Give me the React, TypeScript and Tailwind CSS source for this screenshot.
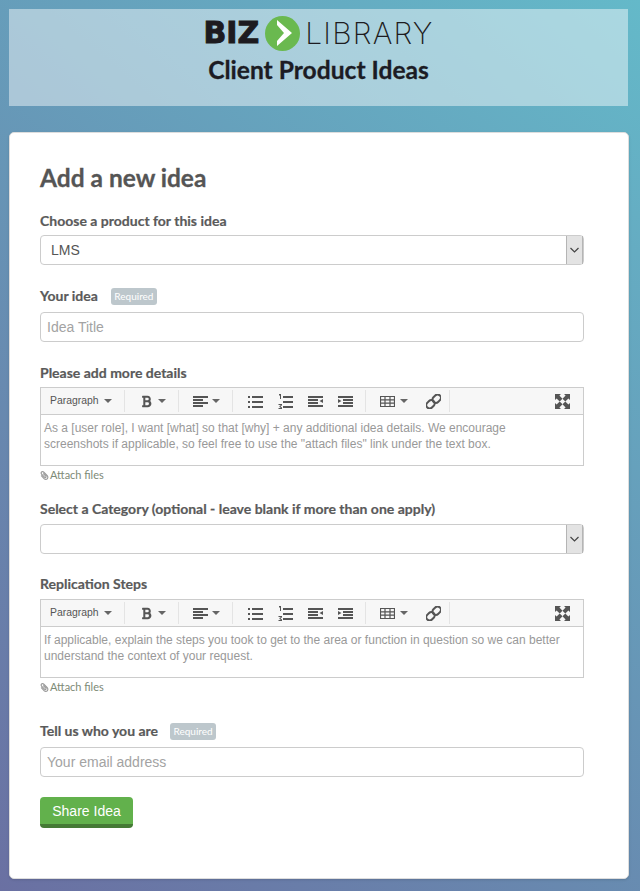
import type { ReactNode } from 'react'
import { FaBold, FaPaperclip } from 'react-icons/fa'

const lato = 'font-[Lato,"Liberation_Sans",sans-serif]'

function Caret() {
  return <span className="inline-block w-0 h-0 border-x-[4.5px] border-x-transparent border-t-[4.5px] border-t-[#666]" />
}

function Label({ children }: { children: ReactNode }) {
  return <div className={`${lato} text-[14px] leading-[20px] font-bold text-[#5a5a5a] [-webkit-text-stroke:0.2px_#5a5a5a]`}>{children}</div>
}

function Required() {
  return (
    <span className="h-[17px] px-[3.5px] rounded-[3px] bg-[#bdc7cc] text-white text-[10px] leading-[17px] font-[Lato,sans-serif] font-normal">
      Required
    </span>
  )
}

// toolbar glyphs, all on a 15x13 box
function Glyph({ children, w = 15, h = 13 }: { children: ReactNode; w?: number; h?: number }) {
  return (
    <svg width={w} height={h} viewBox={`0 0 ${w} ${h}`} fill="#555">
      {children}
    </svg>
  )
}

const AlignIcon = () => (
  <Glyph>
    <rect x="0" y="1" width="15" height="2" />
    <rect x="0" y="4" width="10" height="2" />
    <rect x="0" y="7" width="15" height="2" />
    <rect x="0" y="10" width="10" height="2" />
  </Glyph>
)

const UlIcon = () => (
  <Glyph>
    <rect x="0" y="1" width="2" height="2" />
    <rect x="4" y="1" width="11" height="2" />
    <rect x="0" y="6" width="2" height="2" />
    <rect x="4" y="6" width="11" height="2" />
    <rect x="0" y="11" width="2" height="2" />
    <rect x="4" y="11" width="11" height="2" />
  </Glyph>
)

const OlIcon = () => (
  <Glyph h={15}>
    <path d="M1 0h2v5H2V1.5H1zM0.5 10h3.5v1.2l-1.5 1.2L4 13.5V15H0.5v-1H3l-1.5-1v-1L3 11H0.5z" />
    <rect x="5" y="2" width="10" height="2" />
    <rect x="5" y="7" width="10" height="2" />
    <rect x="5" y="12" width="10" height="2" />
  </Glyph>
)

const OutdentIcon = () => (
  <Glyph>
    <rect x="0" y="1" width="15" height="2" />
    <rect x="0" y="4" width="10" height="2" />
    <rect x="0" y="7" width="10" height="2" />
    <rect x="0" y="10" width="15" height="2" />
    <path d="M15 4v4l-3.5-2z" />
  </Glyph>
)

const IndentIcon = () => (
  <Glyph>
    <rect x="0" y="1" width="15" height="2" />
    <rect x="5" y="4" width="10" height="2" />
    <rect x="5" y="7" width="10" height="2" />
    <rect x="0" y="10" width="15" height="2" />
    <path d="M0 4v4l3.5-2z" />
  </Glyph>
)

const TableIcon = () => (
  <Glyph>
    <path
      d="M0.5 1.5h14v10h-14zM0.5 4.8h14M0.5 8.2h14M5 1.5v10M10 1.5v10"
      fill="none"
      stroke="#555"
      strokeWidth="1.2"
    />
  </Glyph>
)

const LinkIcon = () => (
  <Glyph h={15}>
    <g fill="none" stroke="#555" strokeWidth="2">
      <rect x="7.4" y="0.2" width="6.6" height="9" rx="3.2" transform="rotate(45 10.7 4.7)" />
      <rect x="1.2" y="5.8" width="6.6" height="9" rx="3.2" transform="rotate(45 4.5 10.3)" />
    </g>
  </Glyph>
)

const ExpandIcon = () => (
  <Glyph h={15}>
    <path d="M0 0h6L4.4 1.6 7.5 4.7 4.7 7.5 1.6 4.4 0 6z" />
    <path d="M15 0H9l1.6 1.6L7.5 4.7l2.8 2.8 3.1-3.1L15 6z" />
    <path d="M0 15h6l-1.6-1.6 3.1-3.1-2.8-2.8-3.1 3.1L0 9z" />
    <path d="M15 15H9l1.6-1.6-3.1-3.1 2.8-2.8 3.1 3.1L15 9z" />
  </Glyph>
)

function ToolBtn({ children }: { children: ReactNode }) {
  return <span className="w-[30px] h-full flex items-center justify-center">{children}</span>
}

function Divider() {
  return <span className="w-px h-[22px] bg-[#e4e4e4]" />
}

function Editor({ placeholder }: { placeholder: ReactNode }) {
  return (
    <div>
      <div className="h-[79px] border border-[#ccc] flex flex-col">
        <div className="h-[27px] bg-[#f7f7f7] border-b border-[#ccc] flex items-center">
          <span className="w-[83px] flex items-center pl-[9px] gap-[5px] text-[10.4px] text-[#555]">
            Paragraph <Caret />
          </span>
          <Divider />
          <span className="w-[53px] flex items-center pl-[15px] gap-[5px] text-[#555] text-[13px]">
            <FaBold /> <Caret />
          </span>
          <Divider />
          <span className="w-[53px] flex items-center pl-[14px] gap-[4px]">
            <AlignIcon /> <Caret />
          </span>
          <Divider />
          <span className="w-[132px] flex items-center pl-[7px] h-full">
            <ToolBtn><UlIcon /></ToolBtn>
            <ToolBtn><OlIcon /></ToolBtn>
            <ToolBtn><OutdentIcon /></ToolBtn>
            <ToolBtn><IndentIcon /></ToolBtn>
          </span>
          <Divider />
          <span className="w-[83px] flex items-center pl-[14px] gap-[5px]">
            <TableIcon /> <Caret />
            <span className="ml-[13px] flex"><LinkIcon /></span>
          </span>
          <Divider />
          <span className="ml-auto mr-[13px] flex">
            <ExpandIcon />
          </span>
        </div>
        <div className="flex-1 px-[3px] pt-[5px] text-[12px] leading-[16px] text-[#999]">{placeholder}</div>
      </div>
      <div className="mt-[1px] h-[16px] flex items-center gap-[1px] text-[#999]">
        <FaPaperclip className="text-[9px] -scale-x-100" />
        <span className={`${lato} text-[11px] text-[#7d8a76]`}>Attach files</span>
      </div>
    </div>
  )
}

function SelectBox({ value }: { value?: string }) {
  return (
    <div className="h-[30px] border border-[#ccc] rounded-[4px] flex items-center">
      <span className="flex-1 pl-[10px] text-[14px] text-[#555]">{value}</span>
      <span className="w-[17px] h-full bg-[#e3e3e3] border-x border-[#b5b5b5] flex items-center justify-center">
        <svg width="9" height="6" viewBox="0 0 9 6">
          <path d="M0.5 1l4 4 4-4" fill="none" stroke="#444" strokeWidth="1.2" />
        </svg>
      </span>
    </div>
  )
}

function TextBox({ placeholder }: { placeholder: string }) {
  return (
    <div className="h-[30px] border border-[#ccc] rounded-[4px] flex items-center px-[6px] text-[14px] text-[#a3a3a3]">
      {placeholder}
    </div>
  )
}

export default function App() {
  return (
    <div className="w-[640px] h-[891px] overflow-hidden pt-[9px] px-[9px] bg-[linear-gradient(40deg,#6a70a2,#64b9c9)] font-['Liberation_Sans',Arial,sans-serif]">
      <header className="w-[619px] h-[97px] bg-white/45 flex flex-col items-center">
        <div className="h-[48px] flex items-center">
          <span className="[font-family:'DejaVu_Sans',sans-serif] font-bold text-[#1d1b20] text-[30px] leading-none [-webkit-text-stroke:1px_#1d1b20]">BIZ</span>
          <svg width="35" height="35" viewBox="0 0 35 35" className="ml-[6px] mr-[5px]">
            <circle cx="17.5" cy="17.5" r="17.5" fill="#6ab94f" />
            <path d="M12 4 L27 17 L12 30 L12 25 L19 17 L12 9 Z" fill="#fff" />
          </svg>
          <span className="[font-family:Inter,sans-serif] font-extralight text-[#1d1b20] text-[30px] tracking-[1.2px] leading-none">LIBRARY</span>
        </div>
        <div className={`${lato} text-[24.6px] leading-[26px] font-bold text-[#1c1c24] [-webkit-text-stroke:0.3px_#1c1c24]`}>Client Product Ideas</div>
      </header>

      <main className="mt-[26px] w-[620px] h-[747px] bg-white rounded-[5px] border border-[#ddd] shadow-sm pl-[30px] pr-[44px] pt-[28px]">
        <h1 className={`${lato} text-[24.5px] leading-[34px] font-bold text-[#555] [-webkit-text-stroke:0.3px_#555]`}>Add a new idea</h1>

        <div className="mt-[16px]"><Label>Choose a product for this idea</Label></div>
        <div className="mt-[4px]"><SelectBox value="LMS" /></div>

        <div className="mt-[21px] flex items-center gap-[13px]">
          <Label>Your idea</Label>
          <Required />
        </div>
        <div className="mt-[6px]"><TextBox placeholder="Idea Title" /></div>

        <div className="mt-[21px]"><Label>Please add more details</Label></div>
        <div className="mt-[4px]">
          <Editor
            placeholder={
              <>
                As a [user role], I want [what] so that [why] + any additional idea details. We encourage
                <br />
                screenshots if applicable, so feel free to use the "attach files" link under the text box.
              </>
            }
          />
        </div>

        <div className="mt-[16px]"><Label>Select a Category (optional - leave blank if more than one apply)</Label></div>
        <div className="mt-[5px]"><SelectBox /></div>

        <div className="mt-[20px]"><Label>Replication Steps</Label></div>
        <div className="mt-[5px]">
          <Editor
            placeholder={
              <>
                If applicable, explain the steps you took to get to the area or function in question so we can better
                <br />
                understand the context of your request.
              </>
            }
          />
        </div>

        <div className="mt-[26px] flex items-center gap-[12px]">
          <Label>Tell us who you are</Label>
          <Required />
        </div>
        <div className="mt-[6px]"><TextBox placeholder="Your email address" /></div>

        <button className="mt-[20px] w-[93px] h-[31px] pt-[2px] rounded-[4px] bg-[#62b14c] border-b-[4px] border-[#457a35] text-white text-[14px] block">
          Share Idea
        </button>
      </main>
    </div>
  )
}
